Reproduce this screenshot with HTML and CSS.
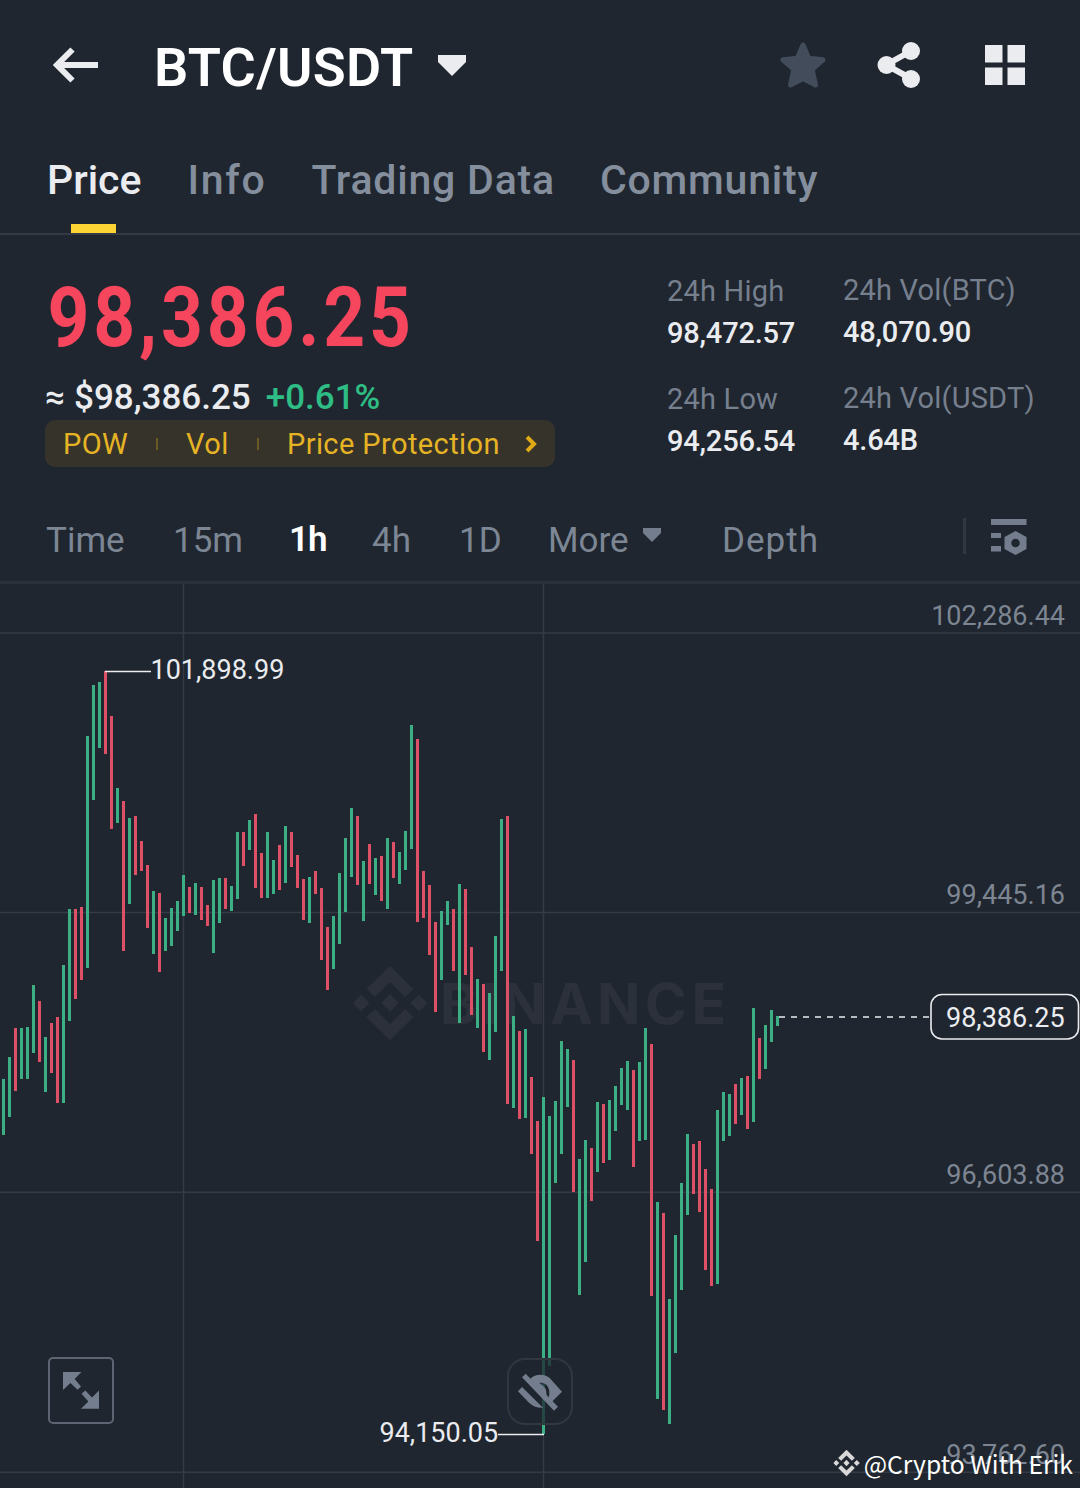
FILE: index.html
```
<!DOCTYPE html>
<html lang="en">
  <head>
    <meta charset="UTF-8" />
    <meta name="viewport" content="width=device-width, initial-scale=1.0" />
    <title>BTC/USDT</title>
    <link rel="stylesheet" href="styles.css">
  </head>
  <body>
    <!-- top bar -->
    <header class="top-bar">
      <svg class="back" width="48" height="40" viewBox="0 0 48 40">
        <path d="M21.5 4.5 6 20l15.5 15.5M7 20h40" />
      </svg>
      <h1>BTC/USDT</h1>
      <svg class="caret" width="28" height="21" viewBox="0 0 28 21">
        <path d="M0 0h28v7L14 21 0 7z" />
      </svg>
      <div class="actions">
        <svg class="star" width="46" height="46" viewBox="0 0 46 46">
          <path d="M23 3l5.7 13.2L43 17.800 32.200 27.500 35.500 43 23 36.500 10.500 43l3.300-15.500L3 17.800l14.300-1.600z" />
        </svg>
        <svg class="share" width="44" height="46" viewBox="0 0 44 46">
          <path d="M34 9 9 23l25 13.500" />
          <circle cx="34" cy="9" r="9" />
          <circle cx="9.500" cy="23" r="9" />
          <circle cx="34" cy="37" r="9" />
        </svg>
        <svg class="grid-icon" width="40" height="40" viewBox="0 0 40 40">
          <path d="M0 0h17.500v17.500H0zM22.500 0H40v17.500H22.500zM0 22.500h17.500V40H0zM22.500 22.500H40V40H22.500z" />
        </svg>
      </div>
    </header>

    <nav class="tabs">
      <a class="active">Price</a>
      <a class="tab-info">Info</a>
      <a>Trading Data</a>
      <a>Community</a>
    </nav>

    <!-- price and 24h stats -->
    <section class="summary">
      <div class="quote">
        <div class="price">98,386.25</div>
        <div class="fiat">
          <span class="approx">≈</span>
          <span>$98,386.25</span>
          <span class="change">+0.61%</span>
        </div>
        <div class="tags">
          <span class="tag-pow">POW</span>
          <i></i>
          <span class="tag-vol">Vol</span>
          <i></i>
          <span class="tag-protection">Price Protection</span>
          <svg width="12" height="18" viewBox="0 0 12 18"><path d="M2 2l7 7-7 7" /></svg>
        </div>
      </div>
      <dl class="stats">
        <div><dt>24h High</dt><dd>98,472.57</dd></div>
        <div><dt>24h Low</dt><dd>94,256.54</dd></div>
      </dl>
      <dl class="stats stats-vol">
        <div><dt>24h Vol(BTC)</dt><dd>48,070.90</dd></div>
        <div><dt>24h Vol(USDT)</dt><dd>4.64B</dd></div>
      </dl>
    </section>

    <nav class="ranges">
      <a>Time</a>
      <a>15m</a>
      <a class="active">1h</a>
      <a>4h</a>
      <a>1D</a>
      <a>More <svg width="18" height="14" viewBox="0 0 18 14"><path d="M0 0h18v5l-9 9-9-9z" /></svg></a>
      <a class="depth">Depth</a>
      <svg class="settings" width="36" height="36" viewBox="0 0 36 36">
        <path d="M0 0h35.500v6H0zM0 14h10v5H0zM0 27h10v5.500H0z" />
        <path fill-rule="evenodd" d="M24.500 12l11 6v12l-11 6-11-6V18zM24.500 19.700a4.300 4.300 0 1 0 0 8.600 4.300 4.300 0 1 0 0-8.600z" />
      </svg>
    </nav>

    <!-- chart -->
    <main class="chart">
      <svg class="plot" width="1080" height="904" viewBox="0 584 1080 904">
        <path class="grid" d="M0 633h1080M0 912.500h1080M0 1192.300h1080M0 1472.300h1080M183.500 584v904M543.500 584v904" />

        <g class="brand">
          <path d="M390 966l23.500 23-8.500 8-15-15-15 15-8.500-8zM390 1040l23.500-23-8.500-8-15 15-15-15-8.500 8zM361 994.500l8.500 8.500-8.500 8.500-8-8.500zM419 994.500l8.500 8.500-8.500 8.500-8.500-8.500zM390 994l8.700 9-8.700 9-8.700-9z" />
          <text x="440" y="1023.500" textLength="286">BINANCE</text>
        </g>

        <g class="axis">
          <text x="1065" y="624.500">102,286.44</text>
          <text x="1065" y="903.500">99,445.16</text>
          <text x="1065" y="1183.500">96,603.88</text>
          <text x="1065" y="1463.500">93,762.60</text>
        </g>

        <g id="candles"></g>

        <g class="marks">
          <path d="M105 671.500h46M498 1434.500h46" />
          <text x="150.500" y="678.500">101,898.99</text>
          <text x="379.500" y="1441.500">94,150.05</text>
        </g>

        <g class="last">
          <path d="M779 1017h152" />
          <rect x="931" y="994.500" width="147.500" height="44.500" rx="11" />
          <text x="946" y="1026.500">98,386.25</text>
        </g>
      </svg>

      <button class="expand">
        <svg width="36" height="37" viewBox="0 0 36 37">
          <path d="M0 0h18.500l-6.900 7 6.400 7.400-3.300 3.300-7.300-6.700L0 18zM36 36.700H18l7.400-7.300-6.900-7.700 3.800-3.300 6.700 7 7-7z" />
        </svg>
      </button>
      <button class="hide">
        <svg width="66" height="66" viewBox="0 0 198 198">
          <path d="M45 55l11-11 97 99-12 12z" />
          <path d="M33 97l12-13 63 62c-18 1-32-5-42-15z" />
          <path fill-rule="evenodd" d="M70 59c14-14 40-16 58-2l37 41-34 34zM97 72c6 4 18 12 20 22l2 16 6 6c8-26-6-48-28-44z" />
        </svg>
      </button>

      <div class="author">
        <svg width="27" height="28" viewBox="352 965 76 76">
          <path d="M390 966l23.500 23-8.500 8-15-15-15 15-8.500-8zM390 1040l23.500-23-8.500-8-15 15-15-15-8.500 8zM361 994.500l8.500 8.500-8.500 8.500-8-8.500zM419 994.500l8.500 8.500-8.500 8.500-8.500-8.500zM390 994l8.700 9-8.700 9-8.700-9z" />
        </svg>
        <span>@Crypto With Erik</span>
      </div>
    </main>

    <script src="chart.js"></script>
  </body>
</html>
```
FILE: styles.css
```
* {
  box-sizing: border-box;
}

body {
  margin: 0;
  width: 1080px;
  height: 1488px;
  overflow: hidden;
  background-color: #1f262f;
  color: #eaecef;
  font-family: Roboto, 'Liberation Sans', sans-serif;
}

/* top bar */
.top-bar {
  display: flex;
  align-items: center;
  height: 134px;
  padding: 0 55px 4px 51px;
}

.back {
  fill: none;
  stroke: #eaecef;
  stroke-width: 6;
}

h1 {
  margin: 6px 0 0 55px;
  width: 284px;
  color: #fff;
  font-size: 54px;
  font-weight: 600;
  line-height: 60px;
  letter-spacing: 0.3px;
}

.caret,
.share,
.grid-icon {
  fill: #eaecef;
}

.actions {
  display: flex;
  align-items: center;
  margin-left: auto;
}

.star {
  margin-right: 51px;
  fill: #434c5a;
  stroke: #434c5a;
  stroke-width: 5;
  stroke-linejoin: round;
}

.share {
  margin-right: 64px;
}

.share path {
  fill: none;
  stroke: #eaecef;
  stroke-width: 6;
}

/* tabs */
.tabs {
  display: flex;
  gap: 45px;
  height: 101px;
  padding-left: 47px;
  border-bottom: 2px solid #333a44;
  color: #848e9c;
  font-size: 41px;
  font-weight: 500;
  line-height: 92px;
  letter-spacing: 0.8px;
}

.tabs a {
  position: relative;
}

.tabs .active {
  margin-right: 1px;
  color: #eaecef;
  letter-spacing: 0;
}

.tabs .tab-info {
  letter-spacing: 1.7px;
}

.tabs .active::after {
  content: '';
  position: absolute;
  left: 24px;
  bottom: 0;
  width: 45px;
  height: 9px;
  background-color: #fcd535;
}

/* summary */
.summary {
  display: grid;
  grid-template-columns: 622px 176px 1fr;
  height: 263px;
  padding: 39px 0 0 45px;
}

.price {
  padding: 2px 0 0 3px;
  color: #f6465d;
  font-size: 84px;
  font-weight: 700;
  line-height: 84px;
  letter-spacing: 4.4px;
  transform: scaleX(0.87);
  transform-origin: left;
}

.fiat {
  display: flex;
  height: 60px;
  padding-top: 15px;
  font-size: 35px;
  font-weight: 500;
  line-height: 46px;
}

.approx {
  width: 29px;
}

.change {
  margin-left: 15px;
  color: #2ebd85;
}

.tags {
  display: flex;
  align-items: center;
  width: 510px;
  height: 47px;
  padding-left: 18px;
  border-radius: 10px;
  background-color: #36332b;
  color: #e6b325;
  font-size: 29px;
  letter-spacing: 0.4px;
}

.tags i {
  width: 2px;
  height: 12px;
  background-color: #6b5a24;
}

.tag-pow {
  width: 93px;
}

.tag-vol {
  width: 71px;
  margin-left: 28px;
}

.tag-protection {
  width: 238px;
  margin-left: 28px;
}

.tags svg {
  fill: none;
  stroke: #e0aa14;
  stroke-width: 4;
}

.stats {
  margin: 0;
  font-size: 29px;
  letter-spacing: 0.2px;
}

.stats-vol {
  margin-top: -1px;
}

.stats > div {
  height: 108px;
}

.stats dt {
  color: #767f8d;
  line-height: 34px;
}

.stats dd {
  margin: 8px 0 0;
  font-weight: 500;
  line-height: 34px;
  letter-spacing: -0.2px;
}

/* ranges */
.ranges {
  display: grid;
  grid-template-columns: 127px 117px 82px 87px 89px 174px 242px 1fr;
  height: 86px;
  padding-left: 46px;
  border-bottom: 3px solid #29303a;
  color: #7d8694;
  font-size: 35px;
  line-height: 86px;
}

.ranges .active {
  margin-left: -1px;
  color: #fff;
  font-weight: 600;
  line-height: 84px;
  letter-spacing: -1px;
}

.ranges a svg {
  margin: 0 0 10px 6px;
  fill: #747d8d;
}

.depth {
  position: relative;
  letter-spacing: 1px;
}

.depth::after {
  content: '';
  position: absolute;
  right: -2px;
  top: 20px;
  width: 3px;
  height: 36px;
  background-color: #303742;
}

.settings {
  margin: 21px 0 0 27px;
  fill: #747d8d;
}

/* chart */
.chart {
  position: relative;
  height: 904px;
}

.plot {
  display: block;
  font-size: 27px;
}

.grid {
  stroke: #343b45;
  stroke-width: 1.5;
}

.brand {
  fill: #2b303b;
  font-family: Inter, sans-serif;
  font-size: 57px;
  font-weight: 700;
}

.axis {
  fill: #7d8592;
  text-anchor: end;
}

.up,
.down {
  stroke: #3cb084;
  stroke-width: 3;
}

.down {
  stroke: #dd5065;
}

.marks,
.last {
  fill: #eaecef;
  stroke: none;
}

.marks path,
.last path {
  stroke: #eaecef;
  stroke-width: 1.6;
}

.last path {
  stroke-dasharray: 6;
}

.last rect {
  fill: #1f262f;
  stroke: #eaecef;
  stroke-width: 1.6;
}

.expand,
.hide {
  position: absolute;
  left: 48px;
  top: 773px;
  display: flex;
  align-items: center;
  justify-content: center;
  width: 66px;
  height: 67px;
  padding: 0;
  border: 2px solid #5d6573;
  border-radius: 5px;
  background: none;
}

.expand svg,
.hide svg {
  flex-shrink: 0;
  fill: #747d8d;
}

.hide {
  left: 507px;
  top: 774px;
  border-color: #31373f;
  border-radius: 18px;
  background-color: rgba(31, 38, 47, 0.75);
}

/* author mark in the corner */
.author {
  position: absolute;
  right: 7px;
  bottom: 7px;
  display: flex;
  align-items: center;
  gap: 4px;
  color: #fff;
  font-family: 'Noto Sans CJK SC', sans-serif;
  font-size: 24.7px;
  line-height: 36px;
}

.author svg {
  fill: #d8d8d8;
}
```
FILE: chart.js
```
// one entry per hour: direction, high y, low y
const candles = `
u 1079 1135,u 1057 1117,d 1028 1091,u 1028 1079,u 1027 1079,u 985 1053,d 1001 1062,u 1037 1092,d 1023 1073,d 1017 1103
u 965 1103,u 909 1021,d 909 999,d 907 980,u 736 968,u 685 800,u 682 748,d 671 754,d 716 829,u 788 823
d 801 951,u 818 904,d 816 875,d 841 871,d 865 928,u 891 954,d 893 972,u 918 951,u 908 946,u 901 931
u 875 916,d 887 913,u 883 915,d 887 920,d 905 926,u 880 953,u 878 923,d 878 909,u 886 911,u 832 899
d 832 866,u 820 850,d 814 888,d 853 898,u 832 898,u 860 894,d 845 890,u 826 883,d 832 867,d 855 888
d 879 920,u 877 923,d 871 894,d 888 960,d 927 990,u 916 969,u 873 944,u 838 912,u 808 877,d 816 885
u 861 921,d 844 884,u 858 895,d 856 901,u 838 909,d 842 878,u 852 884,u 831 870,u 725 849,d 739 922
d 871 918,d 885 955,d 922 1012,u 911 980,u 901 925,d 909 971,u 884 1023,d 889 975,d 947 1015,u 979 1028
d 984 1052,u 993 1060,u 936 1032,u 819 971,d 816 1104,u 1016 1108,d 1031 1119,u 1029 1118,d 1077 1154,d 1121 1241
u 1097 1434,u 1116 1366,u 1101 1183,u 1041 1154,u 1049 1107,d 1060 1192,u 1159 1295,u 1140 1262,d 1148 1201,u 1102 1172
d 1104 1163,u 1100 1160,u 1086 1131,u 1068 1105,u 1061 1110,d 1070 1167,u 1062 1141,u 1028 1140,d 1044 1296,u 1202 1399
d 1213 1410,u 1299 1424,u 1235 1353,u 1183 1290,u 1134 1215,d 1144 1194,d 1141 1212,d 1169 1270,d 1189 1286,u 1110 1284
u 1092 1141,u 1094 1136,d 1084 1124,u 1078 1115,d 1076 1129,u 1008 1122,d 1038 1079,u 1025 1069,u 1010 1042,u 1016 1026
`

const $candles = document.querySelector('#candles')

candles.trim().split(/[,\n]/).forEach((item, i) => {
  const [dir, high, low] = item.split(' ')
  const line = document.createElementNS('http://www.w3.org/2000/svg', 'path')
  line.setAttribute('class', dir === 'u' ? 'up' : 'down')
  line.setAttribute('d', `M${3.5 + i * 6} ${high}V${low}`)
  $candles.appendChild(line)
})
```
